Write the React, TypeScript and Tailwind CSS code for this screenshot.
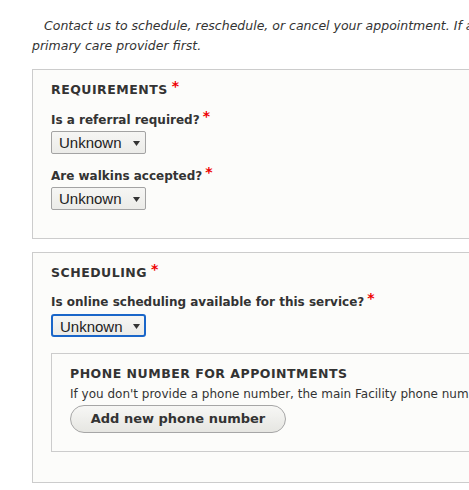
import React from "react";

function Req({ gap = "ml-[3px]" }: { gap?: string }) {
  return <span className={"relative top-[-3px] text-[14px] font-bold leading-none text-[#e00] " + gap}>*</span>;
}

function Picker({ focused = false }: { focused?: boolean }) {
  return (
    <div className="relative inline-block">
      <select
        defaultValue="unknown"
        className={
          "block h-[23px] w-[95px] appearance-none bg-gradient-to-b from-[#f6f6f4] to-[#ebebe8] pl-[7px] text-[15px] text-[#222] outline-none " +
          (focused ? "rounded-[3px] border-2 border-[#1a66c9] pl-[6px]" : "rounded-[2px] border border-[#a3a3a3]")
        }
        style={{ fontFamily: '"Liberation Sans", Arial, sans-serif' }}
      >
        <option value="unknown">Unknown</option>
        <option value="yes">Yes</option>
        <option value="no">No</option>
      </select>
      <svg className="pointer-events-none absolute right-[6px] top-[10px]" width="7" height="5" viewBox="0 0 7 5">
        <path d="M0 0h7L3.5 5z" fill="#333" />
      </svg>
    </div>
  );
}

function Legend({ children, star = false }: { children: React.ReactNode; star?: boolean }) {
  return (
    <div className="whitespace-nowrap text-[12.5px] font-bold uppercase leading-[16px] tracking-[0.04em] text-[#333]">
      {children}
      {star && <Req gap="ml-[4px]" />}
    </div>
  );
}

function Label({ children }: { children: React.ReactNode }) {
  return (
    <div className="whitespace-nowrap text-[12px] font-bold leading-[18px] text-[#333]">
      {children}
      <Req />
    </div>
  );
}

export default function App() {
  return (
    <div
      className="h-[490px] w-[469px] overflow-hidden bg-white text-[#333]"
      style={{ fontFamily: '"DejaVu Sans", Verdana, sans-serif' }}
    >
      <div className="w-[620px] pl-[32px] pt-[16px]">
        <p className="whitespace-nowrap text-[12.5px] italic leading-[20px] text-[#333]">
          <span className="pl-[12px]">
            Contact us to schedule, reschedule, or cancel your appointment. If a referral is required, you'll need to contact your
          </span>
          <br />
          primary care provider first.
        </p>

        <section className="mt-[13px] h-[170px] border border-[#ccc] bg-[#fcfcfa] pl-[18px] pt-[12px]">
          <Legend star>Requirements</Legend>
          <div className="mt-[13px]">
            <Label>Is a referral required?</Label>
            <div className="mt-[2px]">
              <Picker />
            </div>
          </div>
          <div className="mt-[12px]">
            <Label>Are walkins accepted?</Label>
            <div className="mt-[2px]">
              <Picker />
            </div>
          </div>
        </section>

        <section className="mt-[13px] h-[231px] border border-[#ccc] bg-[#fcfcfa] pl-[18px] pt-[12px]">
          <Legend star>Scheduling</Legend>
          <div className="mt-[12px]">
            <Label>Is online scheduling available for this service?</Label>
            <div className="mt-[3px]">
              <Picker focused />
            </div>
          </div>

          <div className="mt-[14px] h-[99px] border border-[#ccc] bg-[#fcfcfa] pl-[18px] pt-[12px]">
            <Legend>Phone number for appointments</Legend>
            <p className="mt-[3px] whitespace-nowrap text-[12px] leading-[18px] text-[#333]">
              If you don't provide a phone number, the main Facility phone number will be shown instead.
            </p>
            <button
              type="button"
              className="mt-[2px] h-[28px] w-[216px] rounded-full border border-[#a6a6a6] bg-gradient-to-b from-[#f7f7f5] to-[#e6e6e2] text-[13px] font-bold text-[#333]"
            >
              Add new phone number
            </button>
          </div>
        </section>
      </div>
    </div>
  );
}
